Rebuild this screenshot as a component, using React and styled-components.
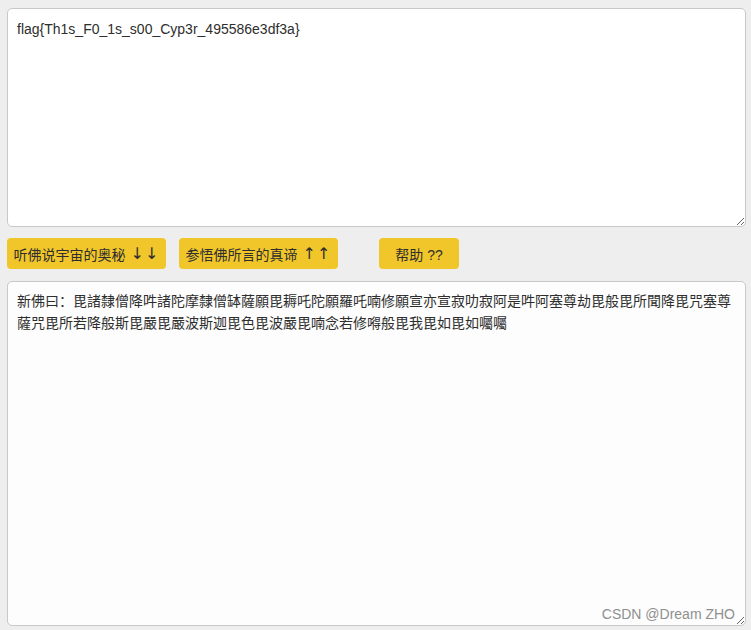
import React from "react";
import styled, { createGlobalStyle } from "styled-components";

const Global = createGlobalStyle`
  html, body { margin: 0; padding: 0; background: #eeeeee; }
  body { font-family: "Liberation Sans", "Noto Sans CJK SC", sans-serif; }
`;

const Page = styled.div`
  display: flex;
  flex-direction: column;
  padding: 8px 5px 4px 7px;
  width: 751px;
  height: 630px;
  box-sizing: border-box;
`;

const Field = styled.div`
  position: relative;
  display: flex;
  height: ${(p) => p.$h}px;
`;

const Area = styled.textarea`
  flex: 1;
  box-sizing: border-box;
  margin: 0;
  border: 1px solid #c8c8c8;
  border-radius: 5px;
  background: ${(p) => p.$bg || "#ffffff"};
  padding: ${(p) => p.$pt}px 9px 9px 9px;
  font-family: "Liberation Sans", "Noto Sans CJK SC", sans-serif;
  font-size: 14px;
  line-height: 22px;
  color: #2e2e2e;
  resize: both;
  outline: none;
`;

const Toolbar = styled.div`
  display: flex;
  gap: 13px;
  margin: 11px 0 12px;
  height: 31px;
`;

const Button = styled.button`
  display: flex;
  align-items: center;
  justify-content: center;
  height: 31px;
  width: ${(p) => p.$w}px;
  margin-left: ${(p) => p.$ml || 0}px;
  border: none;
  border-radius: 4px;
  background: #f1c62b;
  color: #2e2e2e;
  font-family: "Liberation Sans", "Noto Sans CJK SC", sans-serif;
  font-size: 14px;
  padding: 0;
  cursor: pointer;
`;

const Arrows = styled.span`
  font-family: "DejaVu Sans", sans-serif;
  font-size: 16px;
  line-height: 1;
  margin-left: 5px;
  letter-spacing: 1px;
`;

const Mark = styled.span`
  position: absolute;
  right: 11px;
  bottom: 4px;
  font-family: "Liberation Sans", sans-serif;
  font-size: 14px;
  color: #8f8f8f;
  pointer-events: none;
`;

const cipher =
  "新佛曰：毘諸隸僧降吽諸陀摩隸僧缽薩願毘耨吒陀願羅吒喃修願宣亦宣寂叻寂阿是吽阿塞尊劫毘般毘所聞降毘咒塞尊薩咒毘所若降般斯毘嚴毘嚴波斯迦毘色毘波嚴毘喃念若修嘚般毘我毘如毘如囑囑";

export default function App() {
  return (
    <>
      <Global />
      <Page>
        <Field $h={219}>
          <Area $pt={9} readOnly defaultValue="flag{Th1s_F0_1s_s00_Cyp3r_495586e3df3a}" />
        </Field>
        <Toolbar>
          <Button $w={159}>
            听佛说宇宙的奥秘<Arrows>↓↓</Arrows>
          </Button>
          <Button $w={159}>
            参悟佛所言的真谛<Arrows>↑↑</Arrows>
          </Button>
          <Button $w={80} $ml={28}>帮助 ??</Button>
        </Toolbar>
        <Field $h={345}>
          <Area $pt={8} $bg="#fdfdfd" readOnly defaultValue={cipher} />
          <Mark>CSDN @Dream ZHO</Mark>
        </Field>
      </Page>
    </>
  );
}
